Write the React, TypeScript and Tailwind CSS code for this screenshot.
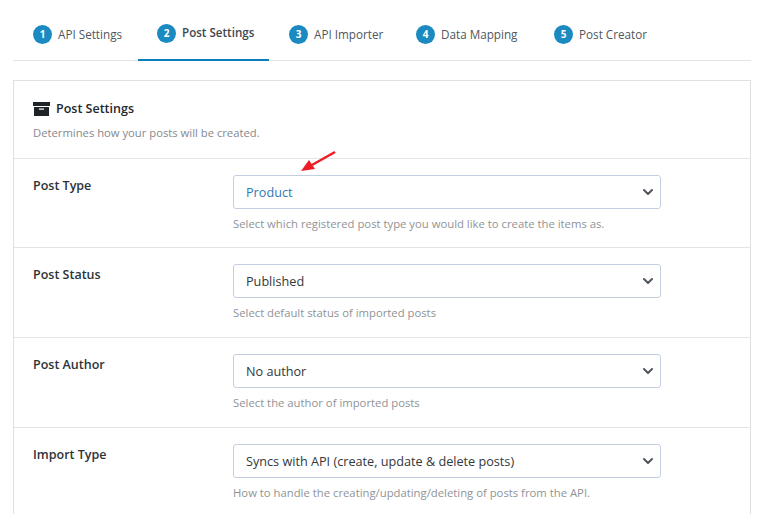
import React from 'react';
import { ChevronDown } from 'lucide-react';

const tabs = [
  { n: 1, label: 'API Settings', w: 'w-[125px]', pl: 'pl-5' },
  { n: 2, label: 'Post Settings', w: 'w-[131px]', pl: 'pl-[19px]', active: true },
  { n: 3, label: 'API Importer', w: 'w-[127px]', pl: 'pl-[20px]' },
  { n: 4, label: 'Data Mapping', w: 'w-[139px]', pl: 'pl-[20px]' },
  { n: 5, label: 'Post Creator', w: 'w-[120px]', pl: 'pl-[19px]' },
];

const rows = [
  { label: 'Post Type', h: 'h-[89px]', value: 'Product', help: 'Select which registered post type you would like to create the items as.', blue: true },
  { label: 'Post Status', h: 'h-[90px]', value: 'Published', help: 'Select default status of imported posts' },
  { label: 'Post Author', h: 'h-[90px]', value: 'No author', help: 'Select the author of imported posts' },
  { label: 'Import Type', h: 'h-[90px]', value: 'Syncs with API (create, update & delete posts)', help: 'How to handle the creating/updating/deleting of posts from the API.' },
];

const App: React.FC = () => {
  return (
    <div className="h-[514px] w-[768px] overflow-hidden bg-white font-['Open_Sans',sans-serif] text-[11.7px] text-[#50575e]">
      <div className="pl-[13px] pr-[17px]">
        <div className="flex h-[61px] border-b border-[#e2e4e7]">
          {tabs.map((t) => (
            <div
              key={t.n}
              className={`flex h-[61px] items-center gap-[6px] ${t.w} ${t.pl} pt-[9px] ${t.active ? 'border-b-2 border-[#0a7fba] pb-[2px] text-[11.6px] font-semibold text-[#3f474e]' : 'pb-[1px]'}`}
            >
              <span className="flex h-[19px] w-[19px] shrink-0 items-center justify-center rounded-full bg-[#1b8ac0] text-[10px] font-bold text-white">
                {t.n}
              </span>
              <span className="whitespace-nowrap">{t.label}</span>
            </div>
          ))}
        </div>

        <div className="relative mt-[19px] border border-[#e0e0e0]">
          <div className="h-[77px] px-[19px] pt-[19px]">
            <div className="flex items-center gap-[6px] text-[12.5px] leading-[18px] font-semibold text-[#23282d]">
              <svg width="17" height="14" viewBox="0 0 17 14" className="shrink-0">
                <path fill="#1d2327" d="M0 0h17v4H0zM1 5h15v9H1z" />
                <rect x="6" y="6.5" width="5" height="1.2" fill="#fff" />
              </svg>
              Post Settings
            </div>
            <p className="mt-[7px] text-[11.25px] leading-[16px] text-[#85898e]">Determines how your posts will be created.</p>
          </div>

          {rows.map((r) => (
            <div key={r.label} className={`flex ${r.h} border-t border-[#e2e4e7] pl-[19px] pt-[16px]`}>
              <div className="w-[200px] pt-[2px] text-[12.5px] leading-[18px] font-semibold text-[#2c3338]">{r.label}</div>
              <div className="w-[428px]">
                <div className={`flex h-[34px] items-center justify-between rounded-[3px] border border-[#c3cfe0] pl-[12px] pr-[4px] text-[12.67px] ${r.blue ? 'text-[#2f77b5]' : 'text-[#32373c]'}`}>
                  <span className="whitespace-nowrap">{r.value}</span>
                  <ChevronDown size={16} strokeWidth={3} className="text-[#50575e]" />
                </div>
                <p className="mt-[7px] whitespace-nowrap text-[11.3px] leading-[16px] text-[#8f9397]">{r.help}</p>
              </div>
            </div>
          ))}

          <svg width="38" height="24" viewBox="0 0 38 24" className="absolute left-[286px] top-[69px]">
            <path d="M35 2 L12 15" stroke="#ee1c25" strokeWidth="2.5" fill="none" />
            <path d="M1 21 L9 10 L15 19 Z" fill="#ee1c25" />
          </svg>
        </div>
      </div>
    </div>
  );
};

export default App;
